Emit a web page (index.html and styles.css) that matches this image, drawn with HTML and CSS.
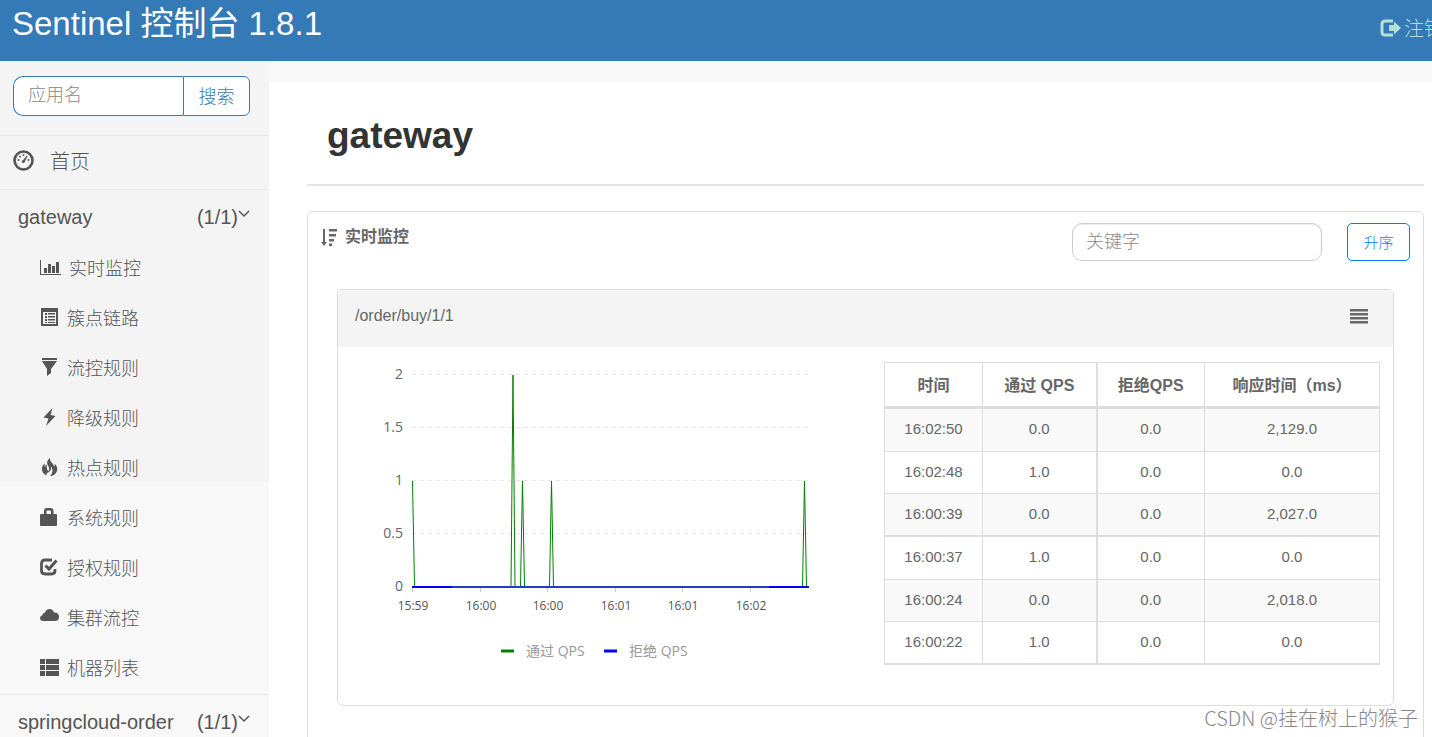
FILE: index.html
```html
<!DOCTYPE html>
<html lang="zh-CN">
<head>
    <meta charset="UTF-8">
    <meta name="viewport" content="width=device-width, initial-scale=1.0">
    <title>Sentinel 控制台</title>
    <link rel="stylesheet" href="styles.css">
</head>
<body>
    <header class="navbar">
        <span class="brand">Sentinel 控制台 1.8.1</span>
        <a class="logout" href="#">
            <svg width="21" height="18" viewBox="0 0 21 18"><path d="M13 2H5Q2 2 2 5v8q0 3 3 3h8" fill="none" stroke="currentColor" stroke-width="3"/><path d="M9 6h5V2.500l7 6.500-7 6.500V12H9z" fill="currentColor"/></svg>
            <span>注销</span>
        </a>
    </header>

    <div class="layout">
        <nav class="sidebar">
            <form class="search">
                <input type="text" class="search-input" placeholder="应用名" aria-label="应用名">
                <button type="button" class="search-btn">搜索</button>
            </form>
            <a class="home" href="#">
                <svg width="21" height="21" viewBox="0 0 21 21"><circle cx="10.500" cy="10.500" r="9" fill="none" stroke="currentColor" stroke-width="2.600"/><g fill="currentColor"><circle cx="5.500" cy="10" r="1"/><circle cx="7" cy="6.500" r="1"/><circle cx="10.500" cy="5" r="1"/><circle cx="15.500" cy="10" r="1"/><circle cx="10.300" cy="11.500" r="1.500"/><path d="M9.500 11l4.200-5.500.9.600-3 6z"/></g></svg>
                <span>首页</span>
            </a>

            <a class="app" href="#">
                <span>gateway</span>
                <span class="count">(1/1)<svg width="12" height="18" viewBox="0 0 12 18"><path d="M1 3l5 5 5-5" fill="none" stroke="currentColor" stroke-width="1.500"/></svg></span>
            </a>
            <ul class="menu">
                <li><a href="#">
                    <svg width="21" height="18" viewBox="0 0 21 18" fill="currentColor"><path d="M0 2h1v14h20v1H0zM4 10h3v5H4zM8 6h3v9H8zM12 8h3v7h-3zM16 4h3v11h-3z"/></svg>
                    <span>实时监控</span></a></li>
                <li><a href="#">
                    <svg width="19" height="18" viewBox="0 0 19 18" fill="currentColor"><path fill-rule="evenodd" d="M1 0h17v18H1zM3 4v12h13V4z"/><path d="M5 5h2v2H5zM8 5h7v1.500H8zM5 8h2v2H5zM8 8h7v1.500H8zM5 11h2v2H5zM8 11h7v1.500H8zM5 14h2v1H5zM8 14h7v1H8z"/></svg>
                    <span>簇点链路</span></a></li>
                <li><a href="#">
                    <svg width="19" height="18" viewBox="0 0 19 18" fill="currentColor"><path d="M2 0h15v2H2zM2 3h15l-6 8v4l-4 3v-7z"/></svg>
                    <span>流控规则</span></a></li>
                <li><a href="#">
                    <svg width="19" height="18" viewBox="0 0 19 18" fill="currentColor"><path d="M12.500 0L3.500 9.500 8.500 10.500 6 18l9.500-10-5-1z"/></svg>
                    <span>降级规则</span></a></li>
                <li><a href="#">
                    <svg width="19" height="18" viewBox="0 0 19 18" fill="currentColor"><path d="M10 0c-3 2-3.500 5-2 7.500C9.500 10 9.500 12 8.500 13 6.500 12 6.500 9 7 6.500 6 6.500 5.500 7.500 5 9 4.500 8 4.500 7 5 5.500 2.500 7 1.500 9.500 2 12c.400 2.500 2 4.500 4.500 5.500C6 15.500 7 15 8 14.500c3-1.500 3.500-3.500 2.500-6 2 1.500 2.500 4 1.500 6.500-.400 1.200-1 2-2 3 3 0 6-2 7-5 .800-2.800 0-5-2.500-7.500.5 1.500.3 2.500-.5 3C13.500 5 9.500 4 10 0z"/></svg>
                    <span>热点规则</span></a></li>
                <li><a href="#">
                    <svg width="19" height="18" viewBox="0 0 19 18" fill="currentColor"><path fill-rule="evenodd" d="M4 6V3q0-3 3-3h3.500q3 0 3 3v3H16q1 0 1 1v10q0 1-1 1H1q-1 0-1-1V7q0-1 1-1zM6.500 6H11V3.500q0-1-1-1H7.500q-1 0-1 1z"/></svg>
                    <span>系统规则</span></a></li>
                <li><a href="#">
                    <svg width="19" height="18" viewBox="0 0 19 18"><path d="M12 2H5Q1.500 2 1.500 5.500v7Q1.500 16 5 16h6.500q3.500 0 3.500-3.500V11" fill="none" stroke="currentColor" stroke-width="2.800"/><path d="M5.500 7.500L9 11l7.500-8.500" fill="none" stroke="currentColor" stroke-width="3"/></svg>
                    <span>授权规则</span></a></li>
                <li><a href="#">
                    <svg width="19" height="18" viewBox="0 0 19 18" fill="currentColor"><path d="M3.500 13Q0 13 0 10q0-2 2.500-3Q2.500 5 5 4.500 6 1 9.500 1q3.500 0 4.500 3.500 5 0 5 4.300Q19 13 15 13z"/></svg>
                    <span>集群流控</span></a></li>
                <li><a href="#">
                    <svg width="19" height="18" viewBox="0 0 19 18" fill="currentColor"><path d="M0 1h5v5H0zM6 1h13v5H6zM0 7h5v5H0zM6 7h13v5H6zM0 13h5v5H0zM6 13h13v5H6z"/></svg>
                    <span>机器列表</span></a></li>
            </ul>

            <a class="app" href="#">
                <span>springcloud-order</span>
                <span class="count">(1/1)<svg width="12" height="18" viewBox="0 0 12 18"><path d="M1 3l5 5 5-5" fill="none" stroke="currentColor" stroke-width="1.500"/></svg></span>
            </a>
        </nav>

        <main class="content">
            <h1>gateway</h1>

            <section class="panel">
                <div class="panel-head">
                    <h2>
                        <svg width="16" height="17" viewBox="0 0 16 17" fill="currentColor"><path d="M2 0h2v13h2l-3 4-3-4h2zM8 0h8v2.500H8zM8 5h7v2.500H8zM8 10h5v2.500H8zM8 14.500h3V17H8z"/></svg>
                        <span>实时监控</span>
                    </h2>
                    <input type="text" class="keyword" placeholder="关键字" aria-label="关键字">
                    <button type="button" class="sort-btn">升序</button>
                </div>

                <div class="resource">
                    <div class="resource-head">
                        <span>/order/buy/1/1</span>
                        <svg width="18" height="16" viewBox="0 0 18 16" fill="currentColor"><path d="M0 1h18v2.600H0zM0 5h18v2.600H0zM0 9h18v2.600H0zM0 13h18v2.600H0z"/></svg>
                    </div>
                    <div class="resource-body">
                        <svg class="chart" viewBox="0 0 496 330" role="img" aria-label="QPS">
                            <g class="grid-lines">
                                <path d="M59 27.500H455M59 80.500H455M59 133.500H455M59 186.500H455"/>
                            </g>
                            <g class="y-labels">
                                <text x="50" y="32">2</text>
                                <text x="50" y="85">1.5</text>
                                <text x="50" y="138">1</text>
                                <text x="50" y="191">0.5</text>
                                <text x="50" y="244">0</text>
                            </g>
                            <path class="ticks" d="M59.500 240v5M127.500 240v5M194.500 240v5M262.500 240v5M329.500 240v5M397.500 240v5"/>
                            <g class="x-labels">
                                <text x="60" y="263">15:59</text>
                                <text x="128" y="263">16:00</text>
                                <text x="195" y="263">16:00</text>
                                <text x="263" y="263">16:01</text>
                                <text x="330" y="263">16:01</text>
                                <text x="398" y="263">16:02</text>
                            </g>
                            <path class="pass" d="M59.500 134L61.500 240H158L160 28L162 240H167.500L169.500 134L171.500 240H196.500L198.500 134L200.500 240H449.500L451.500 134L453.500 240"/>
                            <path class="block" d="M59 240H456"/>
                            <path class="overlap" d="M99 240H416"/>
                            <g class="legend">
                                <path class="pass-mark" d="M148 304h13"/>
                                <text x="173" y="309">通过 QPS</text>
                                <path class="block-mark" d="M251 304h13"/>
                                <text x="276" y="309">拒绝 QPS</text>
                            </g>
                        </svg>
                        <table class="metrics">
                            <thead>
                                <tr>
                                    <th class="col-time">时间</th>
                                    <th class="col-pass">通过 QPS</th>
                                    <th class="col-block">拒绝QPS</th>
                                    <th>响应时间（ms）</th>
                                </tr>
                            </thead>
                            <tbody>
                                <tr><td>16:02:50</td><td>0.0</td><td>0.0</td><td>2,129.0</td></tr>
                                <tr><td>16:02:48</td><td>1.0</td><td>0.0</td><td>0.0</td></tr>
                                <tr><td>16:00:39</td><td>0.0</td><td>0.0</td><td>2,027.0</td></tr>
                                <tr><td>16:00:37</td><td>1.0</td><td>0.0</td><td>0.0</td></tr>
                                <tr><td>16:00:24</td><td>0.0</td><td>0.0</td><td>2,018.0</td></tr>
                                <tr><td>16:00:22</td><td>1.0</td><td>0.0</td><td>0.0</td></tr>
                            </tbody>
                        </table>
                    </div>
                </div>
            </section>
        </main>
    </div>

    <div class="watermark">CSDN @挂在树上的猴子</div>
</body>
</html>
```

FILE: styles.css
```css
* {
    box-sizing: border-box;
}
body {
    margin: 0;
    height: 100vh;
    overflow: hidden;
    display: flex;
    flex-direction: column;
    position: relative;
    font-family: "Liberation Sans", "Noto Sans CJK SC", sans-serif;
    font-weight: 300;
    color: #555;
    background-color: #f8f8f8;
}
a {
    color: inherit;
    text-decoration: none;
}
svg {
    flex: none;
}
input, button {
    font-family: inherit;
    font-weight: inherit;
}
input::placeholder {
    color: #888;
}

/* navbar */
.navbar {
    flex: none;
    display: flex;
    justify-content: space-between;
    height: 61px;
    padding-left: 12px;
    overflow: hidden;
    color: #fff;
    background-color: #337ab7;
}
.brand {
    font-size: 33px;
    line-height: 48px;
    font-weight: 400;
}
.logout {
    display: flex;
    align-items: center;
    gap: 3px;
    height: 55px;
    margin-right: -12px;
    font-size: 20px;
    white-space: nowrap;
    color: #b5dfd3;
}

.layout {
    flex: 1;
    display: flex;
    min-height: 0;
    overflow: hidden;
}

/* sidebar */
.sidebar {
    flex: none;
    width: 269px;
    background: linear-gradient(#f4f4f4 421px, #f8f8f8 421px);
}
.search {
    display: flex;
    padding: 15px 19px 19px 13px;
}
.search-input {
    flex: 1;
    min-width: 0;
    height: 40px;
    padding: 0 14px 2px;
    border: 1px solid #337ab7;
    border-right: 0;
    border-radius: 10px 0 0 10px;
    font-size: 18px;
    background-color: #fff;
}
.search-btn {
    width: 67px;
    height: 40px;
    padding: 0 0 2px;
    border: 1px solid #337ab7;
    border-radius: 0 6px 6px 0;
    font-size: 18px;
    color: #337ab7;
    background-color: #fff;
}
.home {
    display: flex;
    align-items: center;
    gap: 16px;
    height: 54px;
    padding: 0 13px 4px;
    border-top: 1px solid #e7e7e7;
    font-size: 20px;
}
.app {
    display: flex;
    align-items: center;
    justify-content: space-between;
    height: 55px;
    padding: 0 19px 0 18px;
    border-top: 1px solid #e7e7e7;
    font-size: 20px;
}
.count {
    display: flex;
    align-items: center;
}
.menu {
    margin: 0;
    padding: 0;
    list-style: none;
}
.menu a {
    display: flex;
    align-items: center;
    gap: 8px;
    height: 50px;
    padding: 0 0 5px 40px;
    font-size: 18px;
}

/* content */
.content {
    flex: 1;
    min-width: 0;
    margin-top: 21px;
    padding: 0 8px 0 38px;
    background-color: #fff;
}
h1 {
    margin: 0 0 25px;
    padding: 30px 20px 24px;
    border-bottom: 2px solid #e5e5e5;
    font-size: 37px;
    line-height: 48px;
    font-weight: bold;
    color: #333;
}
.panel {
    min-height: 600px;
    border: 1px solid #ddd;
    border-radius: 6px;
    color: #666;
}
.panel-head {
    display: flex;
    align-items: center;
    padding: 11px 13px 28px;
}
h2 {
    flex: 1;
    display: flex;
    align-items: center;
    gap: 8px;
    margin: 0;
    padding-bottom: 10px;
    font-size: 16px;
    line-height: 24px;
    font-weight: bold;
}
.keyword {
    width: 250px;
    height: 38px;
    margin-right: 25px;
    padding: 0 13px;
    border: 1px solid #ccc;
    border-radius: 10px;
    box-shadow: inset 0 1px 1px rgba(0, 0, 0, 0.08);
    font-size: 18px;
}
.sort-btn {
    width: 63px;
    height: 38px;
    padding: 0 0 2px;
    border: 1px solid #007bff;
    border-radius: 5px;
    font-size: 15px;
    color: #007bff;
    background-color: #fff;
}
.resource {
    margin: 0 29px;
    border: 1px solid #ddd;
    border-radius: 6px;
}
.resource-head {
    display: flex;
    align-items: center;
    justify-content: space-between;
    height: 57px;
    padding: 0 25px 5px 17px;
    border-radius: 5px 5px 0 0;
    font-size: 16px;
    background-color: #f4f4f4;
}
.resource-body {
    display: grid;
    grid-template-columns: 1fr 1fr;
    gap: 35px;
    padding: 0 13px 28px 15px;
}

/* chart */
.chart {
    display: block;
    width: 100%;
    font-family: "Open Sans", "Noto Sans CJK SC", sans-serif;
    font-weight: 400;
}
.grid-lines {
    fill: none;
    stroke: #e8e8e8;
    stroke-dasharray: 4 4;
}
.y-labels {
    font-size: 14px;
    text-anchor: end;
    fill: #666;
}
.x-labels {
    font-size: 12px;
    text-anchor: middle;
    fill: #555;
}
.ticks {
    stroke: #ccc;
}
.pass {
    fill: none;
    stroke: #008000;
}
.block, .overlap {
    stroke: #00f;
    stroke-width: 2;
}
.overlap {
    stroke: #1f3fbf;
}
.legend {
    font-size: 14px;
    fill: #999;
}
.pass-mark {
    stroke: #008000;
    stroke-width: 3;
}
.block-mark {
    stroke: #00f;
    stroke-width: 3;
}

/* table */
.metrics {
    width: 100%;
    height: 303px;
    margin-top: 15px;
    border-collapse: collapse;
    table-layout: fixed;
    font-size: 15px;
    text-align: center;
}
.metrics th, .metrics td {
    padding: 0 0 2px;
    border: 1px solid #ddd;
}
.metrics th {
    height: 45px;
    border-bottom-width: 3px;
    font-size: 16px;
    font-weight: bold;
}
.metrics tbody tr:nth-child(odd) {
    background-color: #f9f9f9;
}
.metrics tr:nth-child(3) td, .metrics tr:last-child td {
    border-bottom-width: 2px;
}
.metrics tr th:nth-child(2), .metrics tr td:nth-child(2) {
    border-right-width: 2px;
}
.metrics thead tr:last-child th {
    border-bottom-width: 3px;
}
.col-time {
    width: 98px;
}
.col-pass {
    width: 114px;
}
.col-block {
    width: 108px;
}

.watermark {
    position: absolute;
    right: 14px;
    bottom: 4px;
    font-family: "Noto Sans CJK SC", sans-serif;
    font-size: 20px;
    line-height: 30px;
    color: #888;
    text-shadow: -1px -1px 0 #fff;
}
```
